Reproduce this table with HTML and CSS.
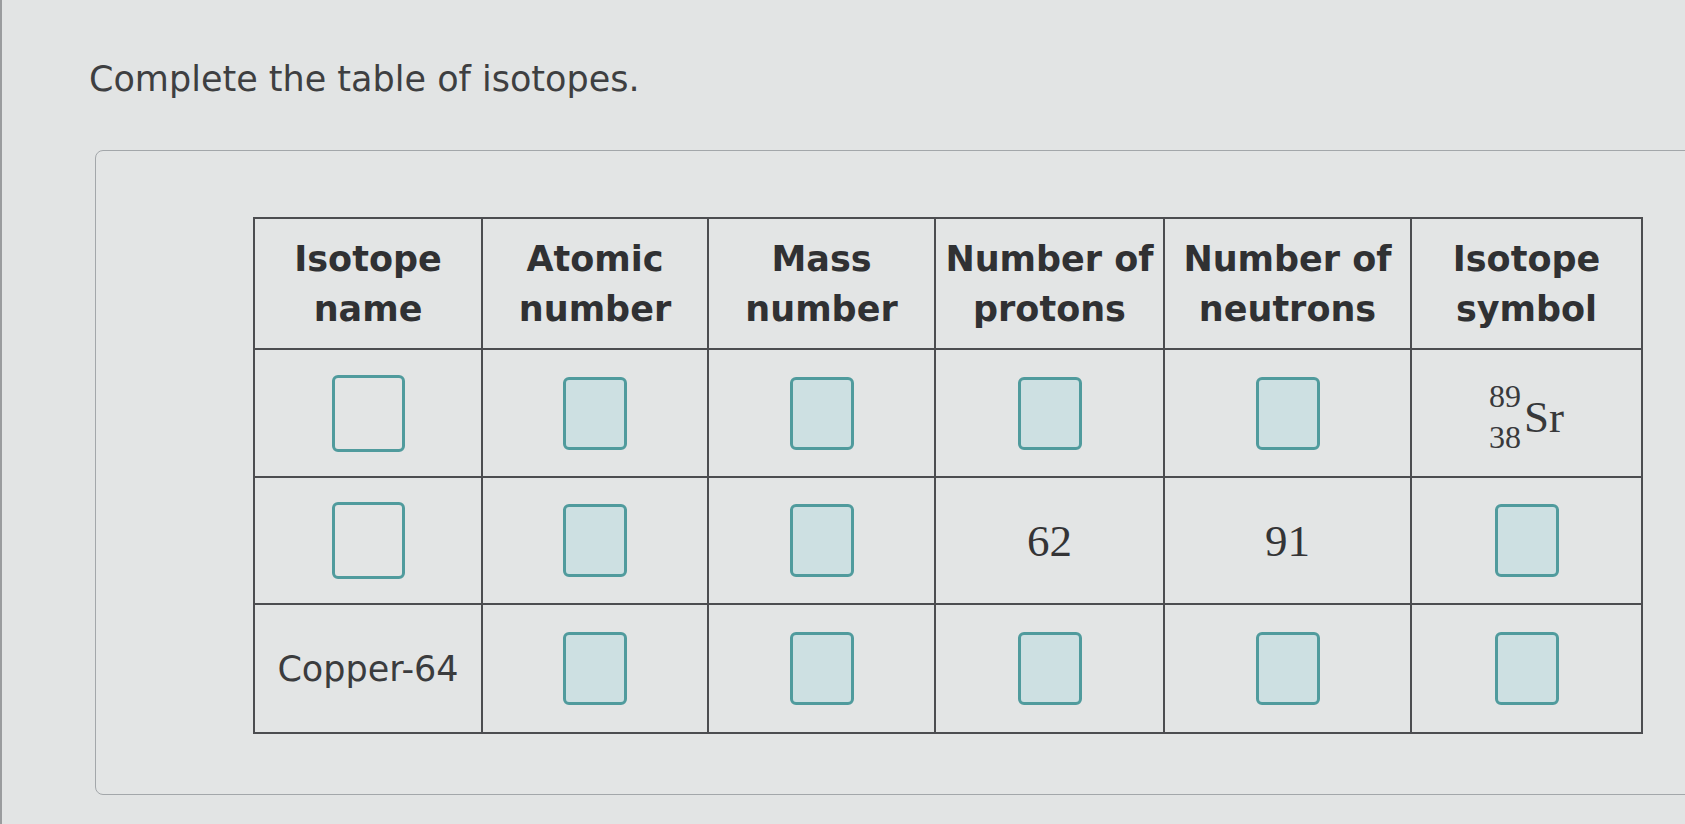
FILE: index.html
```html
<!DOCTYPE html>
<html lang="en">
<head>
<meta charset="utf-8">
<title>Complete the table of isotopes</title>
<link rel="stylesheet" href="styles.css">
</head>
<body>
<div class="page">
  <div class="prompt">Complete the table of isotopes.</div>
  <div class="panel">
    <table class="iso">
      <colgroup>
        <col class="c1"><col class="c2"><col class="c3"><col class="c4"><col class="c5"><col class="c6">
      </colgroup>
      <thead>
        <tr class="head">
          <th>Isotope<br>name</th>
          <th>Atomic<br>number</th>
          <th>Mass<br>number</th>
          <th>Number of<br>protons</th>
          <th>Number of<br>neutrons</th>
          <th>Isotope<br>symbol</th>
        </tr>
      </thead>
      <tbody>
        <tr class="r1">
          <td><span class="box box-name"></span></td>
          <td><span class="box"></span></td>
          <td><span class="box"></span></td>
          <td><span class="box"></span></td>
          <td><span class="box"></span></td>
          <td><span class="nuclide"><span class="scripts"><span>89</span><span>38</span></span><span class="el">Sr</span></span></td>
        </tr>
        <tr class="r2">
          <td><span class="box box-name"></span></td>
          <td><span class="box"></span></td>
          <td><span class="box"></span></td>
          <td class="num">62</td>
          <td class="num">91</td>
          <td><span class="box"></span></td>
        </tr>
        <tr class="r3">
          <td class="name">Copper-64</td>
          <td><span class="box"></span></td>
          <td><span class="box"></span></td>
          <td><span class="box"></span></td>
          <td><span class="box"></span></td>
          <td><span class="box"></span></td>
        </tr>
      </tbody>
    </table>
  </div>
</div>
</body>
</html>
```

FILE: styles.css
```css
html, body {
  margin: 0;
  padding: 0;
  background: #e2e4e4;
  overflow: hidden;
}

.page {
  width: 1685px;
  height: 824px;
  box-sizing: border-box;
  padding-top: 58px;
  border-left: 2px solid #9a9c9e;
  font-family: "DejaVu Sans", Verdana, sans-serif;
  color: #3b3c3e;
}

.prompt {
  margin-left: 87px;
  font-size: 35px;
  line-height: 42px;
  color: #3e3f41;
}

.panel {
  margin-top: 50px;
  margin-left: 93px;
  margin-right: -30px;
  border: 1.5px solid #a3a7aa;
  border-radius: 8px;
  padding: 66px 0 60px 157px;
  background: #e3e5e5;
}

.iso {
  border-collapse: collapse;
  table-layout: fixed;
  width: 1388px;
}

.c1 { width: 228px; }
.c2 { width: 226px; }
.c3 { width: 227px; }
.c4 { width: 229px; }
.c5 { width: 247px; }
.c6 { width: 231px; }

.iso th,
.iso td {
  border: 2px solid #4c4d50;
  padding: 0;
  text-align: center;
  vertical-align: middle;
}

.iso th {
  font-weight: bold;
  font-size: 35px;
  line-height: 50px;
  color: #303133;
}

.head { height: 131px; }
.r1 { height: 128px; }
.r2 { height: 127px; }
.r3 { height: 129px; }

.box {
  display: inline-block;
  vertical-align: middle;
  box-sizing: border-box;
  width: 64px;
  height: 73px;
  border: 3px solid #509b9d;
  border-radius: 6px;
  background: #cde0e2;
}

.box-name {
  width: 73px;
  height: 77px;
  background: transparent;
}

.num {
  font-family: "Liberation Serif", "Times New Roman", serif;
  font-size: 45px;
  color: #343436;
}

.name {
  font-size: 35px;
  color: #3b3c3e;
}

.nuclide {
  display: inline-flex;
  align-items: center;
  font-family: "Liberation Serif", "Times New Roman", serif;
  color: #38393b;
  margin-top: 8px;
}

.scripts {
  display: inline-flex;
  flex-direction: column;
  align-items: flex-end;
  font-size: 32px;
  line-height: 41px;
  margin-right: 3px;
}

.el {
  font-size: 45px;
  line-height: 44px;
}
```
